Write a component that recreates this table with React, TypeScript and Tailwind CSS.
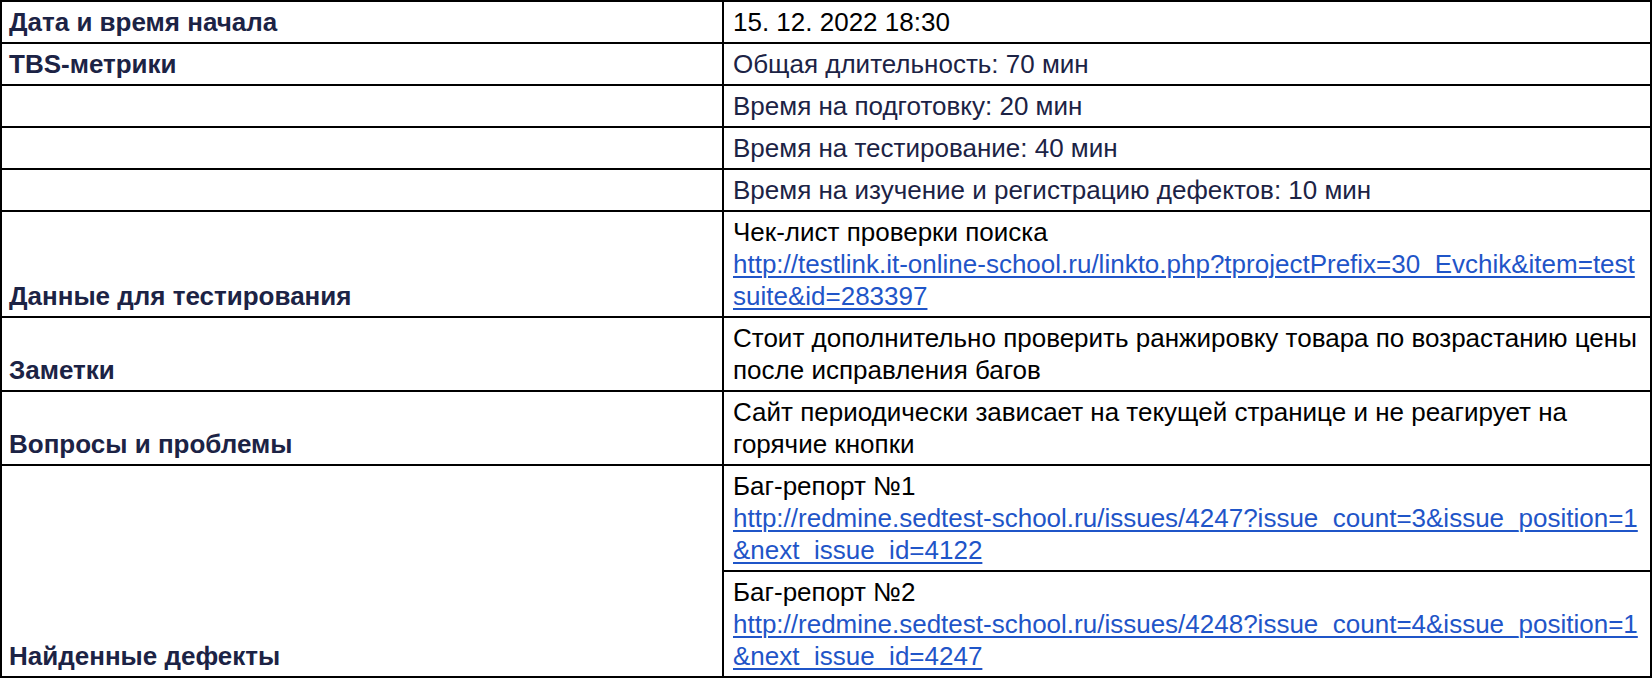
import React from "react";

const navy = "text-[#1c2345]";

function Label({ children, span }: { children?: React.ReactNode; span?: boolean }) {
  return (
    <div
      className={`flex items-end border-r-2 border-b-2 border-black pl-[7px] pt-[4px] pb-[4px] font-bold ${navy} ${
        span ? "row-span-2" : ""
      }`}
    >
      <span>{children}</span>
    </div>
  );
}

function Cell({ children, className = "" }: { children?: React.ReactNode; className?: string }) {
  return (
    <div className={`border-r-2 border-b-2 border-black pl-[9px] pt-[4px] pb-[4px] whitespace-nowrap ${className}`}>
      {children}
    </div>
  );
}

function Link({ children }: { children: React.ReactNode }) {
  return (
    <a href="#" className="text-[#1f55c8] underline underline-offset-[3px] decoration-[1.5px]">
      {children}
    </a>
  );
}

export default function App() {
  return (
    <div
      className="w-[1652px] h-[678px] bg-white overflow-hidden"
      style={{ fontFamily: '"Liberation Sans", Arial, sans-serif' }}
    >
      <div className="grid grid-cols-[722px_928px] border-l-2 border-t-2 border-black text-[26px] leading-[32px]">
        <Label>Дата и время начала</Label>
        <Cell className="text-black">15. 12. 2022 18:30</Cell>

        <Label>TBS-метрики</Label>
        <Cell className={navy}>Общая длительность: 70 мин</Cell>

        <Label />
        <Cell className={navy}>Время на подготовку: 20 мин</Cell>

        <Label />
        <Cell className={navy}>Время на тестирование: 40 мин</Cell>

        <Label />
        <Cell className={navy}>Время на изучение и регистрацию дефектов: 10 мин</Cell>

        <Label>Данные для тестирования</Label>
        <Cell className="text-black">
          <div>Чек-лист проверки поиска</div>
          <div>
            <Link>http://testlink.it-online-school.ru/linkto.php?tprojectPrefix=30_Evchik&amp;item=test</Link>
          </div>
          <div>
            <Link>suite&amp;id=283397</Link>
          </div>
        </Cell>

        <Label>Заметки</Label>
        <Cell className="text-black">
          <div>Стоит дополнительно проверить ранжировку товара по возрастанию цены</div>
          <div>после исправления багов</div>
        </Cell>

        <Label>Вопросы и проблемы</Label>
        <Cell className="text-black">
          <div>Сайт периодически зависает на текущей странице и не реагирует на</div>
          <div>горячие кнопки</div>
        </Cell>

        <Label span>Найденные дефекты</Label>
        <Cell className="text-black">
          <div>Баг-репорт №1</div>
          <div>
            <Link>http://redmine.sedtest-school.ru/issues/4247?issue_count=3&amp;issue_position=1</Link>
          </div>
          <div>
            <Link>&amp;next_issue_id=4122</Link>
          </div>
        </Cell>
        <Cell className="text-black">
          <div>Баг-репорт №2</div>
          <div>
            <Link>http://redmine.sedtest-school.ru/issues/4248?issue_count=4&amp;issue_position=1</Link>
          </div>
          <div>
            <Link>&amp;next_issue_id=4247</Link>
          </div>
        </Cell>
      </div>
    </div>
  );
}
